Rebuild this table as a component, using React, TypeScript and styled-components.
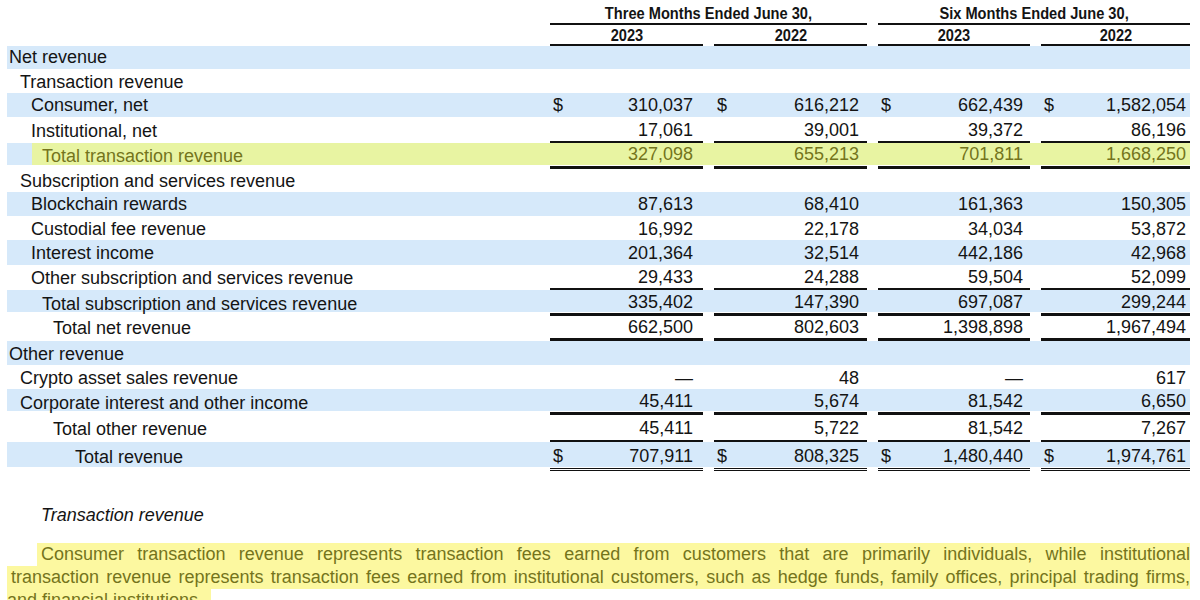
import React from "react";
import styled, { createGlobalStyle, css } from "styled-components";

const Global = createGlobalStyle`
  html, body { margin: 0; padding: 0; background: #ffffff; }
  body { font-family: "Liberation Sans", Arial, sans-serif; color: #141414; }
`;

const BLUE = "#d6e9fa";
const MARK = "#e8f4a2";
const PMARK = "#fcf8a0";
const OLIVE = "#74741c";

const COLS = "532px 153px 153px 152px 149px";

const Page = styled.div`
  width: 1200px;
  height: 600px;
  overflow: hidden;
  box-sizing: border-box;
  padding-left: 7px;
  padding-right: 10px;
`;

const HeadGrid = styled.div`
  display: grid;
  grid-template-columns: ${COLS};
  column-gap: 11px;
  font-family: "Liberation Sans", Arial, sans-serif;
  font-weight: 700;
  font-size: 17px;
  color: #141414;
`;

const Narrow = styled.span`
  display: inline-block;
  white-space: nowrap;
  transform: scaleX(0.86);
  transform-origin: center;
`;

const Period = styled.div<{ $col: number }>`
  grid-column: ${(p) => p.$col} / span 2;
  grid-row: 1;
  height: 25px;
  box-sizing: border-box;
  padding-top: 4px;
  border-bottom: 2px solid #111;
  text-align: center;
  line-height: 19px;
`;

const Year = styled.div<{ $col: number }>`
  grid-column: ${(p) => p.$col};
  grid-row: 2;
  height: 21px;
  box-sizing: border-box;
  padding-top: 1px;
  border-bottom: 2px solid #111;
  text-align: center;
  line-height: 19px;
`;

type Tone = "blue" | "white" | "mark";
type Rule = "none" | "thin" | "thick" | "mid" | "double";

const ruleWidth: Record<Rule, number> = { none: 0, thin: 2, mid: 2, thick: 3, double: 3 };

const Row = styled.div<{ $h: number; $tone: Tone; $rule: Rule }>`
  display: grid;
  grid-template-columns: ${COLS};
  column-gap: 11px;
  height: ${(p) => p.$h}px;
  font-size: 18px;
  ${(p) => {
    const cut = ruleWidth[p.$rule] + (p.$rule === "none" ? 0 : 1);
    if (p.$tone === "white") return css``;
    if (p.$tone === "blue")
      return css`
        background: linear-gradient(${BLUE}, ${BLUE}) top left / 100% calc(100% - ${cut}px) no-repeat;
      `;
    return css`
      background:
        linear-gradient(${MARK}, ${MARK}) 25px 0 / calc(100% - 25px) calc(100% - ${cut}px) no-repeat,
        linear-gradient(${BLUE}, ${BLUE}) top left / 100% calc(100% - ${cut}px) no-repeat;
      color: ${OLIVE};
    `;
  }}
`;

const Label = styled.div<{ $level: number; $pt: number }>`
  display: flex;
  align-items: center;
  padding-top: ${(p) => p.$pt}px;
  padding-left: ${(p) => 2 + p.$level * 11}px;
  white-space: nowrap;
`;

const Cell = styled.div<{ $rule: Rule; $pr: number; $pt: number }>`
  display: flex;
  align-items: center;
  justify-content: space-between;
  box-sizing: border-box;
  padding: ${(p) => p.$pt}px ${(p) => p.$pr}px 0 3px;
  ${(p) =>
    p.$rule === "double"
      ? css`border-bottom: 3px double #111;`
      : p.$rule === "none"
      ? css``
      : css`border-bottom: ${ruleWidth[p.$rule]}px solid #111;`}
`;

const Dollar = styled.span`
  display: inline-block;
`;

const Num = styled.span`
  margin-left: auto;
`;

const Heading = styled.div`
  margin-top: 33px;
  padding-left: 34px;
  font-style: italic;
  font-size: 18px;
  line-height: 23px;
`;

const Para = styled.div`
  margin-top: 16px;
  font-size: 18px;
  line-height: 23px;
  color: ${OLIVE};
`;

const Line = styled.div<{ $indent?: number; $last?: boolean }>`
  padding-left: ${(p) => p.$indent ?? 0}px;
  text-align: justify;
  text-align-last: ${(p) => (p.$last ? "left" : "justify")};
  white-space: nowrap;
`;

const Hi = styled.span<{ $block?: boolean }>`
  background: ${PMARK};
  display: ${(p) => (p.$block ? "block" : "inline-block")};
  padding-left: ${(p) => (p.$block ? 4 : 0)}px;
  padding-right: ${(p) => (p.$block ? 0 : 8)}px;
`;

type RowData = {
  label: string;
  level: number;
  h: number;
  pt?: number;
  values?: string[];
  dollar?: boolean;
  rule?: Rule;
  mark?: boolean;
};

const rows: RowData[] = [
  { label: "Net revenue", level: 0, h: 23, pt: 0 },
  { label: "Transaction revenue", level: 1, h: 24 },
  { label: "Consumer, net", level: 2, h: 24, pt: 0, values: ["310,037", "616,212", "662,439", "1,582,054"], dollar: true },
  { label: "Institutional, net", level: 2, h: 26, values: ["17,061", "39,001", "39,372", "86,196"], rule: "thin" },
  { label: "Total transaction revenue", level: 3, h: 26, pt: 0, values: ["327,098", "655,213", "701,811", "1,668,250"], rule: "thick", mark: true },
  { label: "Subscription and services revenue", level: 1, h: 23 },
  { label: "Blockchain rewards", level: 2, h: 24, pt: 0, values: ["87,613", "68,410", "161,363", "150,305"] },
  { label: "Custodial fee revenue", level: 2, h: 24, values: ["16,992", "22,178", "34,034", "53,872"] },
  { label: "Interest income", level: 2, h: 25, values: ["201,364", "32,514", "442,186", "42,968"] },
  { label: "Other subscription and services revenue", level: 2, h: 25, values: ["29,433", "24,288", "59,504", "52,099"], rule: "thin" },
  { label: "Total subscription and services revenue", level: 3, h: 26, values: ["335,402", "147,390", "697,087", "299,244"], rule: "thick" },
  { label: "Total net revenue", level: 4, h: 25, pt: 0, values: ["662,500", "802,603", "1,398,898", "1,967,494"], rule: "thick" },
  { label: "Other revenue", level: 0, h: 24 },
  { label: "Crypto asset sales revenue", level: 1, h: 24, values: ["—", "48", "—", "617"] },
  { label: "Corporate interest and other income", level: 1, h: 26, values: ["45,411", "5,674", "81,542", "6,650"], rule: "thick" },
  { label: "Total other revenue", level: 4, h: 27, values: ["45,411", "5,722", "81,542", "7,267"], rule: "mid" },
  { label: "Total revenue", level: 6, h: 29, values: ["707,911", "808,325", "1,480,440", "1,974,761"], dollar: true, rule: "double" },
];

const padRight = [10, 8, 7, 4];

export default function App() {
  return (
    <Page>
      <Global />
      <HeadGrid>
        <Period $col={2}><Narrow>Three Months Ended June 30,</Narrow></Period>
        <Period $col={4}><Narrow>Six Months Ended June 30,</Narrow></Period>
        <Year $col={2}><Narrow>2023</Narrow></Year>
        <Year $col={3}><Narrow>2022</Narrow></Year>
        <Year $col={4}><Narrow>2023</Narrow></Year>
        <Year $col={5}><Narrow>2022</Narrow></Year>
      </HeadGrid>
      {rows.map((r, i) => {
        const tone: Tone = r.mark ? "mark" : i % 2 === 0 ? "blue" : "white";
        const rule = r.rule ?? "none";
        const pt = r.pt ?? 2;
        return (
          <Row key={r.label} $h={r.h} $tone={tone} $rule={rule}>
            <Label $level={r.level} $pt={pt}>{r.label}</Label>
            {r.values?.map((v, j) => (
              <Cell key={j} $rule={rule} $pr={padRight[j]} $pt={pt}>
                {r.dollar ? <Dollar>$</Dollar> : null}
                <Num>{v}</Num>
              </Cell>
            ))}
          </Row>
        );
      })}
      <Heading>Transaction revenue</Heading>
      <Para>
        <Line $indent={30}>
          <Hi $block>
            Consumer transaction revenue represents transaction fees earned from customers that are primarily
            individuals, while institutional
          </Hi>
        </Line>
        <Line>
          <Hi $block>
            transaction revenue represents transaction fees earned from institutional customers, such as hedge
            funds, family offices, principal trading firms,
          </Hi>
        </Line>
        <Line $last>
          <Hi>and financial institutions.</Hi>
        </Line>
      </Para>
    </Page>
  );
}
